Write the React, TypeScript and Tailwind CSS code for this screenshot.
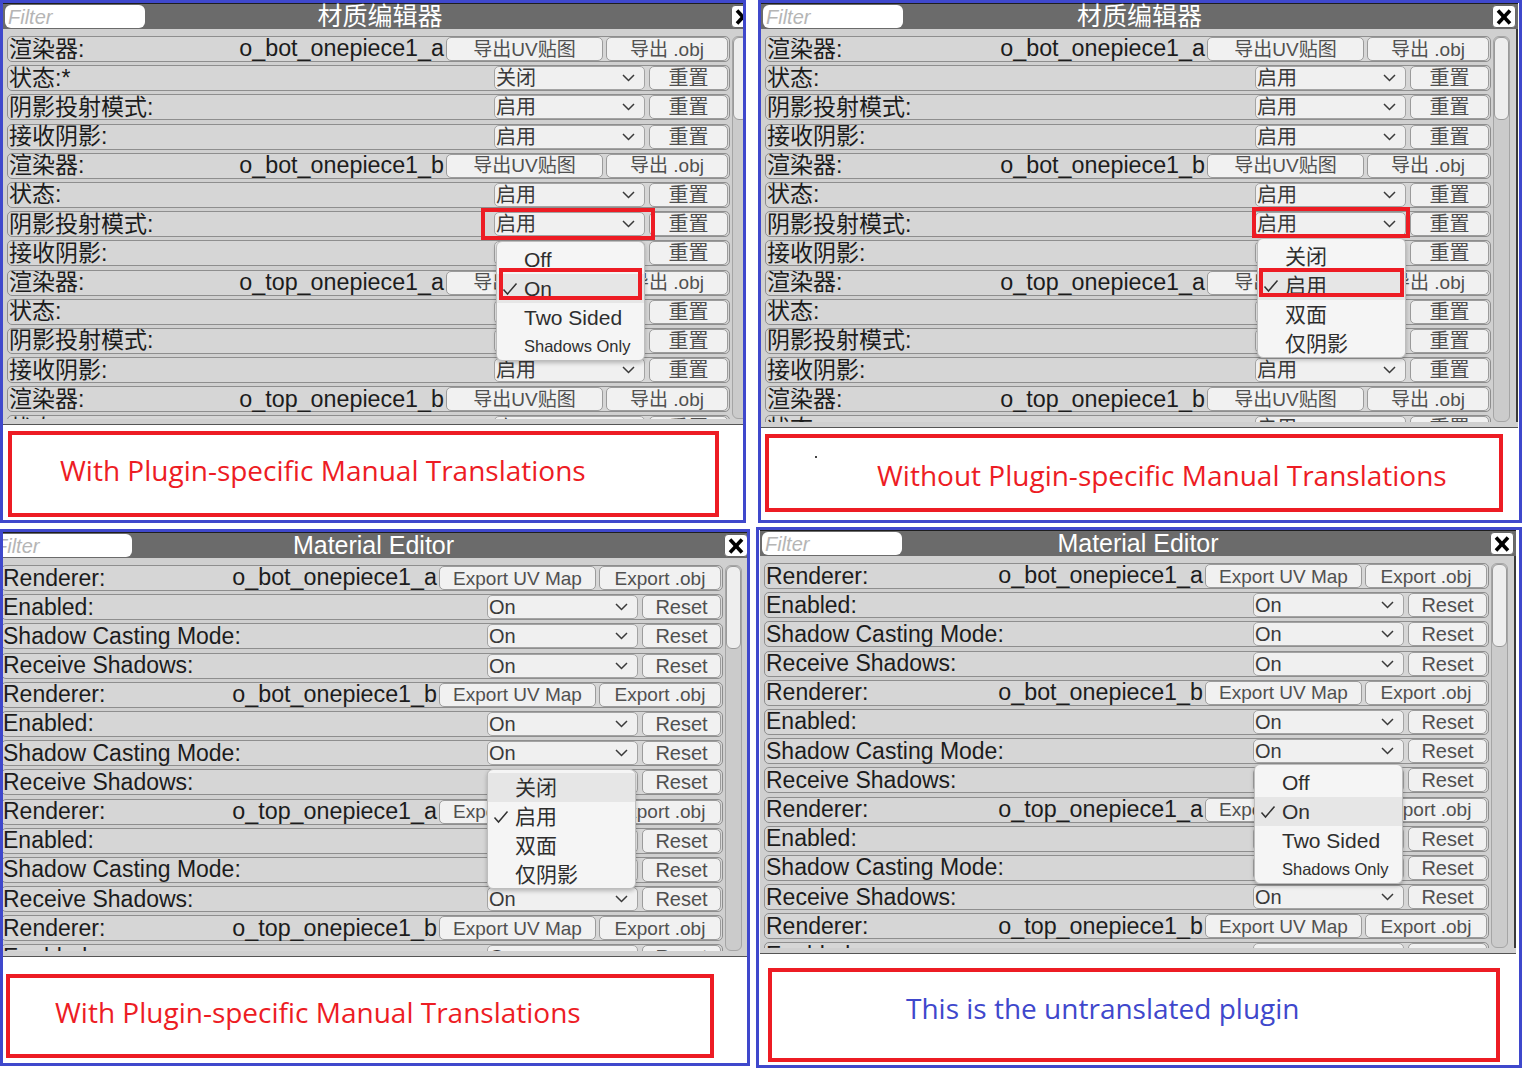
import React from 'react';

const UI_FONT = '"Liberation Sans", "Noto Sans CJK SC", Arial, sans-serif';
const CAP_FONT = '"Open Sans", "Noto Sans", sans-serif';

type Row = { k: 'r'; label: string; name: string } | { k: 's'; label: string; value: string };
type MenuItem = { t: string; small?: boolean; check?: boolean; hl?: boolean };

function buildRows(cn: boolean, firstValue: string, star: boolean): Row[] {
  const v = cn ? '启用' : 'On';
  const L = cn
    ? ['渲染器:', '状态:', '阴影投射模式:', '接收阴影:']
    : ['Renderer:', 'Enabled:', 'Shadow Casting Mode:', 'Receive Shadows:'];
  const names = ['o_bot_onepiece1_a', 'o_bot_onepiece1_b', 'o_top_onepiece1_a', 'o_top_onepiece1_b'];
  const rows: Row[] = [];
  names.forEach((n, i) => {
    rows.push({ k: 'r', label: L[0], name: n });
    if (i < 3) {
      rows.push({ k: 's', label: i === 0 && star ? '状态:*' : L[1], value: i === 0 ? firstValue : v });
      rows.push({ k: 's', label: L[2], value: v });
      rows.push({ k: 's', label: L[3], value: v });
    } else {
      rows.push({ k: 's', label: L[1], value: v });
    }
  });
  return rows;
}

function Chevron() {
  return (
    <svg width="13" height="8" viewBox="0 0 13 8" className="shrink-0">
      <polyline points="1,1 6.5,6.5 12,1" fill="none" stroke="#3a3a3a" strokeWidth="1.5" />
    </svg>
  );
}

function Check() {
  return (
    <svg width="16" height="16" viewBox="0 0 16 16">
      <polyline points="1.5,8.5 5.5,13 14.5,2.5" fill="none" stroke="#333" strokeWidth="1.5" />
    </svg>
  );
}

function Btn({ children, cls }: { children: React.ReactNode; cls: string }) {
  return (
    <div
      className={
        'h-[24px] shrink-0 flex items-center justify-center rounded-[5px] border border-[#9b9b9b] bg-[#f1f1f1] text-[19px] leading-none text-[#505050] whitespace-nowrap ' +
        cls
      }
    >
      {children}
    </div>
  );
}

function RowView({ row, cn }: { row: Row; cn: boolean }) {
  return (
    <div className="h-[26px] shrink-0 flex items-center rounded-[5px] border border-[#8e8e8e] bg-[#d6d6d6] pl-[1px] pr-[1px]">
      <span className="text-[23px] leading-none text-[#1c1c1c] whitespace-nowrap">{row.label}</span>
      <span className="flex-1" />
      {row.k === 'r' ? (
        <>
          <span className="text-[23.3px] leading-none text-[#1c1c1c] whitespace-nowrap mr-[2px]">{row.name}</span>
          <Btn cls="w-[157px]">{cn ? '导出UV贴图' : 'Export UV Map'}</Btn>
          <Btn cls="w-[122px] ml-[3px]">{cn ? '导出 .obj' : 'Export .obj'}</Btn>
        </>
      ) : (
        <>
          <div className="w-[151px] h-[24px] shrink-0 flex items-center justify-between rounded-[5px] border border-[#a3a3a3] bg-[#f0f0f0] pl-[1px] pr-[9px] text-[20px] leading-none text-[#3a3a3a] whitespace-nowrap">
            <span>{row.value}</span>
            <Chevron />
          </div>
          <Btn cls="w-[79px] ml-[4px] text-[20px]">{cn ? '重置' : 'Reset'}</Btn>
        </>
      )}
    </div>
  );
}

function UWindow(props: {
  outerCls: string;
  innerCls: string;
  filterCls: string;
  cn: boolean;
  star: boolean;
  firstValue: string;
  menuCls: string;
  menu: MenuItem[];
  redSel?: string;
  redItem?: string;
  rightBorder: boolean;
}) {
  const rows = buildRows(props.cn, props.firstValue, props.star);
  return (
    <div className={'relative overflow-hidden shrink-0 ' + props.outerCls}>
      <div className={'relative h-full flex flex-col border-b border-[#555] ' + props.innerCls}>
        {/* title bar */}
        <div className="h-[26px] shrink-0 grid grid-cols-[142px_1fr_142px] items-center bg-[#6b6b6b] border-t border-[#1e1e1e]">
          <div
            className={
              'h-[23px] w-[140px] bg-white rounded-[6px] flex items-center pl-[3px] italic text-[20px] leading-none text-[#b5b5b5] ' +
              props.filterCls
            }
          >
            Filter
          </div>
          <div className="text-[25px] leading-none text-white text-center whitespace-nowrap">
            {props.cn ? '材质编辑器' : 'Material Editor'}
          </div>
          <div className="justify-self-end mr-[2px] w-[24px] h-[23px] bg-white rounded-[4px] border border-[#666] flex items-center justify-center">
            <svg width="18" height="18" viewBox="0 0 18 18">
              <line x1="3" y1="2.5" x2="15" y2="15.5" stroke="#000" strokeWidth="3.6" />
              <line x1="15" y1="2.5" x2="3" y2="15.5" stroke="#000" strokeWidth="3.6" />
            </svg>
          </div>
        </div>
        {/* content */}
        <div className="flex-1 min-h-0 flex bg-[#d0d0d0] pb-[5px]">
          <div className="flex-1 min-w-0 pl-[4px] pt-[7px] flex flex-col gap-[3.2px] overflow-hidden">
            {rows.map((r, i) => (
              <RowView key={i} row={r} cn={props.cn} />
            ))}
          </div>
          <div className="ml-[2px] mt-[7px] w-[17px] shrink-0 rounded-[6px] border border-[#a5a5a5] bg-[#cbcbcb] flex flex-col items-center">
            <div className="w-[15px] h-[83px] rounded-[6px] border border-[#9a9a9a] bg-[#eeeeee]" />
          </div>
          <div className="w-[6px] shrink-0" />
          <div className={props.rightBorder ? 'w-[2px] shrink-0 bg-[#3a3a3a]' : 'w-[2px] shrink-0'} />
        </div>

        {/* dropdown menu overlay */}
        <div
          className={
            'absolute w-[149px] h-[120px] pt-[3px] rounded-[6px] border border-[#bdbdbd] bg-[#f5f5f5] shadow-[0_2px_4px_rgba(0,0,0,0.25)] overflow-hidden ' +
            props.menuCls
          }
        >
          {props.menu.map((m, i) => (
            <div
              key={i}
              className={
                'h-[29px] flex items-center text-[#2e2e2e] whitespace-nowrap ' + (m.hl ? 'bg-[#e6e6e6]' : '')
              }
            >
              <div className="w-[27px] shrink-0 pl-[5px] flex items-center">{m.check ? <Check /> : null}</div>
              <span className={m.small ? 'text-[16.5px] leading-none' : 'text-[21px] leading-none'}>{m.t}</span>
            </div>
          ))}
        </div>

        {props.redSel ? <div className={'absolute border-4 border-[#ed1c24] ' + props.redSel} /> : null}
        {props.redItem ? <div className={'absolute border-4 border-[#ed1c24] ' + props.redItem} /> : null}
      </div>
    </div>
  );
}

const enMenu = (hlFirst: boolean): MenuItem[] => [
  { t: 'Off', hl: hlFirst },
  { t: 'On', check: true, hl: !hlFirst },
  { t: 'Two Sided' },
  { t: 'Shadows Only', small: true },
];
const cnMenu = (hlFirst: boolean): MenuItem[] => [
  { t: '关闭', hl: hlFirst },
  { t: '启用', check: true, hl: !hlFirst },
  { t: '双面' },
  { t: '仅阴影' },
];

export default function App() {
  return (
    <div className="w-[1526px] h-[1071px] bg-white overflow-hidden" style={{ fontFamily: UI_FONT }}>
      {/* top row */}
      <div className="flex items-start">
        {/* top-left */}
        <div className="w-[746px] h-[523px] shrink-0 border-[3px] border-[#3f48cc] flex flex-col">
          <UWindow
            outerCls="w-[740px] h-[422px]"
            innerCls="w-[754px]"
            filterCls="ml-[2px]"
            cn={true}
            star={true}
            firstValue="关闭"
            menuCls="left-[493px] top-[238px]"
            menu={enMenu(false)}
            redSel="left-[478px] top-[205px] w-[174px] h-[32px]"
            redItem="left-[496px] top-[265px] w-[143px] h-[32px]"
            rightBorder={false}
          />
          <div className="mt-[6px] ml-[5px] w-[711px] h-[86px] shrink-0 border-4 border-[#ed1c24] flex items-center pl-[48px] pb-[8px]">
            <span className="text-[28px] text-[#ed1c24] whitespace-nowrap" style={{ fontFamily: CAP_FONT }}>
              With Plugin-specific Manual Translations
            </span>
          </div>
        </div>
        {/* top-right */}
        <div className="ml-[12px] w-[764px] h-[523px] shrink-0 border-[3px] border-[#3f48cc] flex flex-col">
          <UWindow
            outerCls="w-[757px] h-[425px]"
            innerCls="w-[757px]"
            filterCls="ml-[2px]"
            cn={true}
            star={false}
            firstValue="启用"
            menuCls="left-[496px] top-[235px]"
            menu={cnMenu(false)}
            redSel="left-[491px] top-[204px] w-[158px] h-[31px]"
            redItem="left-[498px] top-[265px] w-[145px] h-[29px]"
            rightBorder={true}
          />
          <div className="relative mt-[6px] ml-[4px] w-[738px] h-[78px] shrink-0 border-4 border-[#ed1c24] flex items-center pl-[108px] pt-[4px]">
            <span className="absolute left-[46px] top-[18px] w-[2px] h-[2px] bg-[#444]" />
            <span className="text-[28px] text-[#ed1c24] whitespace-nowrap" style={{ fontFamily: CAP_FONT }}>
              Without Plugin-specific Manual Translations
            </span>
          </div>
        </div>
      </div>
      {/* bottom row */}
      <div className="flex items-start">
        {/* bottom-left */}
        <div className="mt-[6px] w-[750px] h-[537px] shrink-0 border-[3px] border-[#3f48cc] flex flex-col">
          <UWindow
            outerCls="w-[744px] h-[425px]"
            innerCls="w-[753px] ml-[-6px]"
            filterCls="ml-[-5px]"
            cn={false}
            star={false}
            firstValue="On"
            menuCls="left-[490px] top-[237px]"
            menu={cnMenu(true)}
            rightBorder={true}
          />
          <div className="mt-[17px] ml-[3px] w-[708px] h-[84px] shrink-0 border-4 border-[#ed1c24] flex items-center pl-[45px] pb-[8px]">
            <span className="text-[28px] text-[#ed1c24] whitespace-nowrap" style={{ fontFamily: CAP_FONT }}>
              With Plugin-specific Manual Translations
            </span>
          </div>
        </div>
        {/* bottom-right */}
        <div className="mt-[4px] ml-[6px] w-[766px] h-[541px] shrink-0 border-[3px] border-[#3f48cc] flex flex-col">
          <UWindow
            outerCls="ml-[1px] w-[757px] h-[424px]"
            innerCls="w-[756px]"
            filterCls="ml-[2px]"
            cn={false}
            star={false}
            firstValue="On"
            menuCls="left-[494px] top-[234px]"
            menu={enMenu(false)}
            rightBorder={true}
          />
          <div className="mt-[14px] ml-[9px] w-[732px] h-[94px] shrink-0 border-4 border-[#ed1c24] flex items-center pl-[134px] pb-[14px]">
            <span className="text-[28px] text-[#3f48cc] whitespace-nowrap" style={{ fontFamily: CAP_FONT }}>
              This is the untranslated plugin
            </span>
          </div>
        </div>
      </div>
    </div>
  );
}
